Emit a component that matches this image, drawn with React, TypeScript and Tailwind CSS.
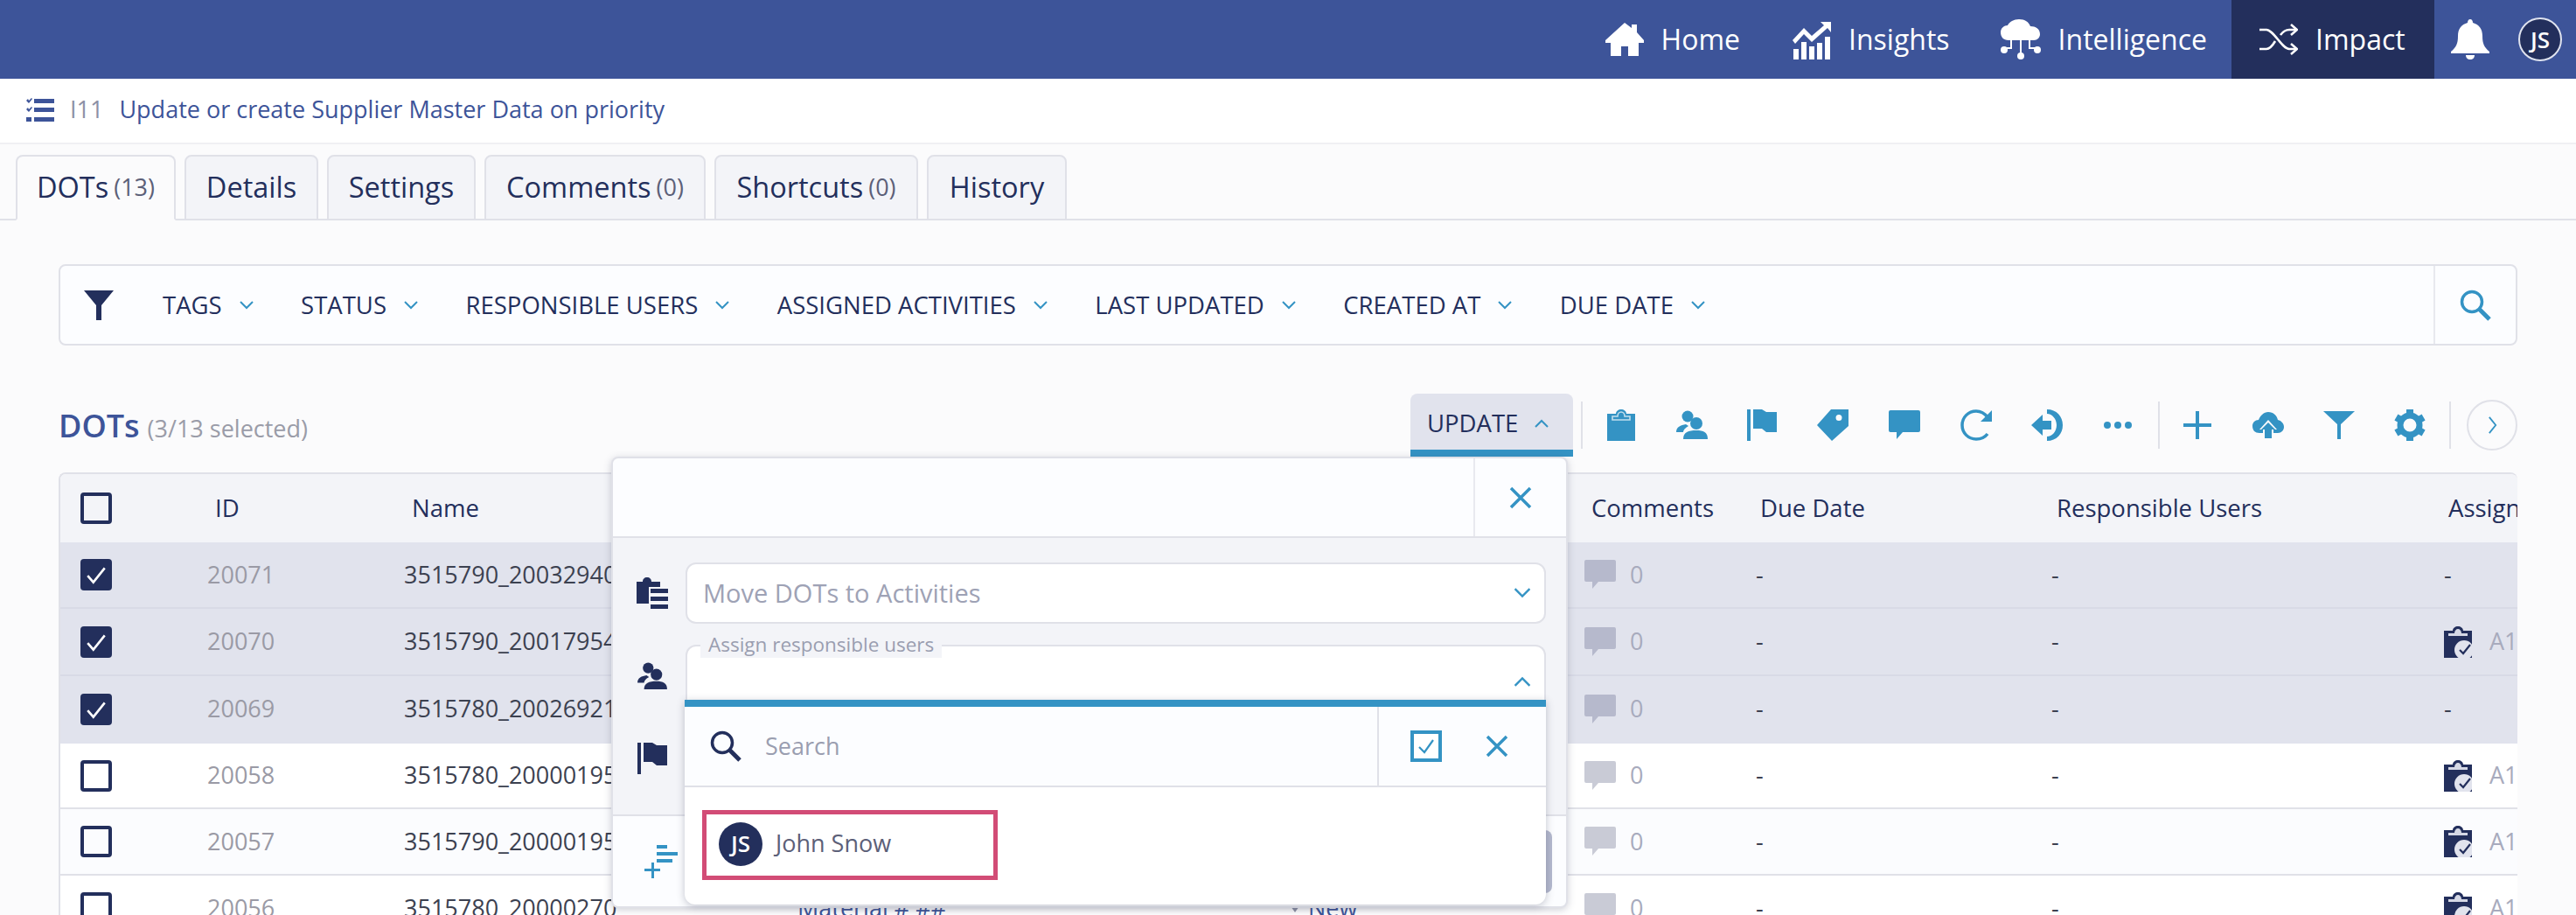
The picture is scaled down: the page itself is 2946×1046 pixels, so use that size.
import React from "react";

type IP = { className?: string };

const Home = ({ className }: IP) => (
  <svg viewBox="0 0 44 38" className={className} fill="currentColor">
    <path d="M22 0 L30 6 V2 H36 V11 L44 20 V23 H38 V38 H26 V27 H18 V38 H6 V23 H0 V20 Z" />
  </svg>
);
const InsightsI = ({ className }: IP) => (
  <svg viewBox="0 0 44 46" className={className} fill="currentColor">
    <path d="M0 24 L13 10 L22 19 L36 7 L32 3 H44 V15 L40 10 L22 26 L13 17 L3 28 Z" />
    <rect x="1" y="34" width="6" height="12" />
    <rect x="10" y="26" width="6" height="20" />
    <rect x="19" y="31" width="6" height="15" />
    <rect x="28" y="27" width="6" height="19" />
    <rect x="37" y="20" width="6" height="26" />
  </svg>
);
const CloudNet = ({ className }: IP) => (
  <svg viewBox="0 0 46 46" className={className} fill="currentColor">
    <path d="M9 24 C3 24 0 20 0 15 C0 10 4 7 8 7 C10 3 15 0 21 0 C28 0 32 3 34 8 C40 8 45 11 45 17 C45 21 42 24 38 24 Z" />
    <path d="M12 24 V33 H6 M23 24 V40 M33 24 V33 H40" fill="none" stroke="currentColor" strokeWidth="2" />
    <circle cx="4" cy="35" r="4" />
    <circle cx="23" cy="42" r="4" />
    <circle cx="42" cy="35" r="4" />
  </svg>
);
const ShuffleI = ({ className }: IP) => (
  <svg viewBox="0 0 44 36" className={className} fill="none" stroke="currentColor" strokeWidth="2.6">
    <path d="M0 7 H8 C16 7 26 29 34 29 H42" />
    <path d="M0 29 H8 C12 29 15 25 18 20 M24 13 C27 9 30 7 34 7 H42" />
    <path d="M36 1 L43 7 L36 13 M36 23 L43 29 L36 35" />
  </svg>
);
const Bell = ({ className }: IP) => (
  <svg viewBox="0 0 46 46" className={className} fill="currentColor">
    <path d="M23 0 C25 0 26 2 26 4 C33 6 37 11 37 19 C37 28 39 32 45 37 V39 H1 V37 C7 32 9 28 9 19 C9 11 13 6 20 4 C20 2 21 0 23 0 Z" />
    <path d="M18 41 H28 C28 44 26 46 23 46 C20 46 18 44 18 41 Z" />
  </svg>
);
const ListCheck = ({ className }: IP) => (
  <svg viewBox="0 0 32 28" className={className} fill="currentColor">
    <rect x="9" y="1" width="23" height="5" />
    <rect x="9" y="11" width="23" height="5" />
    <rect x="9" y="22" width="23" height="5" />
    <path d="M0 3 L2 1 L3 3 L6 0 L7 1 L3 6 Z" />
    <path d="M0 13 L2 11 L3 13 L6 10 L7 11 L3 16 Z" />
    <rect x="0" y="22" width="6" height="5" />
  </svg>
);
const Funnel = ({ className }: IP) => (
  <svg viewBox="0 0 34 34" className={className} fill="currentColor">
    <path d="M0 0 H34 L20 17 V34 H14 V17 Z" />
  </svg>
);
const Chev = ({ up, className }: IP & { up?: boolean }) => (
  <svg viewBox="0 0 16 10" className={className} fill="none" stroke="currentColor" strokeWidth="2">
    <path d={up ? "M1 9 L8 2 L15 9" : "M1 1 L8 8 L15 1"} />
  </svg>
);
const SearchI = ({ className }: IP) => (
  <svg viewBox="0 0 36 36" className={className} fill="none" stroke="currentColor">
    <circle cx="14" cy="14" r="11.5" strokeWidth="3.5" />
    <path d="M22 22 L34 34" strokeWidth="5" />
  </svg>
);
const Clip = ({ className }: IP) => (
  <svg viewBox="0 0 32 36" className={className} fill="currentColor">
    <path d="M0 5 H10 C10 2 13 0 16 0 C19 0 22 2 22 5 H32 V36 H0 Z" />
    <path d="M6 8 H12 C12 5 14 3 16 3 C18 3 20 5 20 8 H26 V12 H6 Z" fill="none" stroke="#fff" strokeOpacity="0.7" strokeWidth="1.6" />
  </svg>
);
const UsersI = ({ className }: IP) => (
  <svg viewBox="0 0 36 34" className={className} fill="currentColor" stroke="none">
    <circle cx="13" cy="7" r="6.5" />
    <path d="M0 25 C0 19 5 17 11 16 L14 18 C10 20 8 23 8 25 Z" />
    <circle cx="23" cy="15" r="7" />
    <path d="M8 33 C8 25 14 23 23 23 C31 23 36 25 36 33 Z" />
  </svg>
);
const FlagI = ({ className }: IP) => (
  <svg viewBox="0 0 34 36" className={className} fill="currentColor">
    <rect x="0" y="0" width="4" height="36" />
    <path d="M7 0 H17 L22 3 H34 V26 H22 L17 22 H7 Z" />
  </svg>
);
const TagI = ({ className }: IP) => (
  <svg viewBox="0 0 36 36" className={className} fill="currentColor">
    <path fillRule="evenodd" d="M16 0 H36 V19 L17 36 L0 18 Z M25 6 A3.5 3.5 0 1 0 25 13 A3.5 3.5 0 1 0 25 6 Z" />
  </svg>
);
const CommentI = ({ className }: IP) => (
  <svg viewBox="0 0 36 34" className={className} fill="currentColor">
    <path d="M2 0 H34 Q36 0 36 2 V23 Q36 25 34 25 H16 L9 33 V25 H2 Q0 25 0 23 V2 Q0 0 2 0 Z" />
  </svg>
);
const RedoI = ({ className }: IP) => (
  <svg viewBox="0 0 36 36" className={className} fill="none" stroke="currentColor">
    <path d="M31 28 C28 32 23 34 18 34 C9 34 2 27 2 18 C2 9 9 2 18 2 C24 2 28 5 31 9" strokeWidth="3.5" />
    <path d="M36 1 V14 H23 Z" fill="currentColor" stroke="none" />
  </svg>
);
const BackI = ({ className }: IP) => (
  <svg viewBox="0 0 36 36" className={className} fill="currentColor">
    <path d="M18 0 C29 0 36 8 36 18 C36 28 29 36 18 36 V31 C24 31 29 25 29 18 C29 11 24 5 18 5 Z" />
    <path d="M0 18 L13 6 V13 H23 V23 H13 V30 Z" />
  </svg>
);
const Dots = ({ className }: IP) => (
  <svg viewBox="0 0 32 10" className={className} fill="currentColor">
    <circle cx="4" cy="5" r="4" />
    <circle cx="16" cy="5" r="4" />
    <circle cx="28" cy="5" r="4" />
  </svg>
);
const PlusI = ({ className }: IP) => (
  <svg viewBox="0 0 32 32" className={className} fill="currentColor">
    <rect x="14" y="0" width="4" height="32" />
    <rect x="0" y="14" width="32" height="4" />
  </svg>
);
const UploadI = ({ className }: IP) => (
  <svg viewBox="0 0 36 30" className={className} fill="currentColor">
    <path d="M8 24 C3 24 0 21 0 16 C0 12 3 9 7 9 C9 4 13 0 18 0 C24 0 28 4 29 9 C33 10 36 13 36 17 C36 21 33 24 29 24 H24 V20 H28 L18 9 L8 20 H12 V24 Z" />
    <path d="M14 30 V20 H10 L18 12 L26 20 H22 V30 Z" />
  </svg>
);
const FilterI = ({ className }: IP) => (
  <svg viewBox="0 0 36 32" className={className} fill="currentColor">
    <path d="M0 0 H36 L20 15 V32 H16 V15 Z" />
  </svg>
);
const GearI = ({ className }: IP) => (
  <svg viewBox="0 0 36 36" className={className} fill="currentColor">
    <circle cx="18" cy="18" r="11" fill="none" stroke="currentColor" strokeWidth="7" />
    {[0, 60, 120, 180, 240, 300].map((a) => (
      <rect key={a} x="14" y="0" width="8" height="8" transform={`rotate(${a} 18 18)`} />
    ))}
  </svg>
);
const CloseI = ({ className }: IP) => (
  <svg viewBox="0 0 26 26" className={className} fill="none" stroke="currentColor" strokeWidth="3.5">
    <path d="M2 2 L24 24 M24 2 L2 24" />
  </svg>
);
const MoveI = ({ className }: IP) => (
  <svg viewBox="0 0 36 36" className={className} fill="currentColor">
    <path d="M0 5 H7 C7 2 9 0 12 0 C15 0 17 2 17 5 H27 V11 H14 V30 H0 Z" />
    <rect x="16" y="13" width="20" height="5" />
    <rect x="16" y="22" width="20" height="5" />
    <rect x="16" y="31" width="20" height="5" />
  </svg>
);
const SortAdd = ({ className }: IP) => (
  <svg viewBox="0 0 38 38" className={className} fill="currentColor">
    <rect x="14" y="0" width="12" height="4" />
    <rect x="14" y="8" width="24" height="4" />
    <rect x="14" y="16" width="18" height="4" />
    <rect x="0" y="27" width="18" height="3" />
    <rect x="8" y="20" width="3" height="18" />
  </svg>
);
const ClipCheck = ({ className }: IP) => (
  <svg viewBox="0 0 32 36" className={className}>
    <path d="M0 5 H10 C10 2 13 0 16 0 C19 0 22 2 22 5 H32 V36 H0 Z" fill="#232f5c" />
    <path d="M5 8 H12 C12 5 14 3 16 3 C18 3 20 5 20 8 H27 V11 H5 Z" fill="#d5d8e5" />
    <circle cx="23" cy="27" r="11" fill="#e1e3ed" />
    <path d="M18 27 L22 31 L30 21" fill="none" stroke="#232f5c" strokeWidth="2.2" />
  </svg>
);

const tabs: { t: string; c?: string; w: string }[] = [
  { t: "DOTs", c: "(13)", w: "w-[183px]" },
  { t: "Details", w: "w-[153px]" },
  { t: "Settings", w: "w-[170px]" },
  { t: "Comments", c: "(0)", w: "w-[253px]" },
  { t: "Shortcuts", c: "(0)", w: "w-[233px]" },
  { t: "History", w: "w-[160px]" },
];

const filters = ["TAGS", "STATUS", "RESPONSIBLE USERS", "ASSIGNED ACTIVITIES", "LAST UPDATED", "CREATED AT", "DUE DATE"];

const rows = [
  { id: "20071", name: "3515790_20032940", h: "h-[76px]", bg: "bg-[#e1e3ed]", border: "border-[#d8dae6]", on: true, a: false },
  { id: "20070", name: "3515790_20017954", h: "h-[77px]", bg: "bg-[#e1e3ed]", border: "border-[#d8dae6]", on: true, a: true },
  { id: "20069", name: "3515780_20026921", h: "h-[77px]", bg: "bg-[#e1e3ed]", border: "border-[#e1e3ed]", on: true, a: false },
  { id: "20058", name: "3515780_20000195", h: "h-[75px]", bg: "bg-white", border: "border-[#e0e1e8]", on: false, a: true },
  { id: "20057", name: "3515790_20000195", h: "h-[76px]", bg: "bg-[#fbfcfe]", border: "border-[#e0e1e8]", on: false, a: true },
  { id: "20056", name: "3515780_20000270", h: "h-[76px]", bg: "bg-white", border: "border-[#e0e1e8]", on: false, a: true },
];

const Tool = ({ w, children }: { w: string; children: React.ReactNode }) => (
  <div className={`flex shrink-0 items-center justify-center text-[#3493c4] ${w}`}>{children}</div>
);

export default function App() {
  return (
    <div className="relative h-[1046px] w-[2946px] overflow-hidden bg-[#fbfbfc] font-['Open_Sans',sans-serif]">
      {/* top bar */}
      <header className="flex h-[90px] items-center justify-end bg-[#3d5499] text-[32px] leading-none text-white">
        <div className="flex h-full items-center gap-[20px] pr-[60px]">
          <Home className="h-[38px] w-[44px]" />
          <span>Home</span>
        </div>
        <div className="flex h-full items-center gap-[20px] pr-[58px]">
          <InsightsI className="h-[46px] w-[44px]" />
          <span>Insights</span>
        </div>
        <div className="flex h-full items-center gap-[20px] pr-[28px]">
          <CloudNet className="h-[46px] w-[46px]" />
          <span>Intelligence</span>
        </div>
        <div className="flex h-full w-[232px] items-center gap-[20px] bg-[#232f5c] pl-[32px]">
          <ShuffleI className="h-[36px] w-[44px]" />
          <span>Impact</span>
        </div>
        <div className="flex h-full w-[162px] items-center pl-[18px]">
          <Bell className="h-[46px] w-[46px]" />
          <div className="ml-[32px] flex h-[50px] w-[50px] items-center justify-center rounded-full border-2 border-[#dfe3ef] bg-[#232f5c] text-[26px] font-semibold">
            JS
          </div>
        </div>
      </header>

      {/* breadcrumb */}
      <div className="flex h-[75px] items-center border-b-2 border-[#f0f0f3] bg-white pb-[2px] pl-[30px] text-[27px] text-[#3d5499]">
        <ListCheck className="h-[28px] w-[32px]" />
        <span className="ml-[18px] text-[#8d91a6]">I11</span>
        <span className="ml-[18px]">Update or create Supplier Master Data on priority</span>
      </div>

      {/* tabs */}
      <div className="flex h-[87px] items-end gap-[10px] border-b-2 border-[#e0e1e8] pl-[18px]">
        {tabs.map((t, i) => (
          <div
            key={t.t}
            className={`-mb-[2px] flex h-[75px] items-center justify-center gap-[6px] rounded-t-lg border-2 border-[#e0e1e8] text-[32.5px] font-medium text-[#232f5c] ${t.w} ${
              i === 0 ? "border-b-[#fbfbfc] bg-[#fbfbfc]" : "bg-[#f3f4f8]"
            }`}
          >
            <span>{t.t}</span>
            {t.c && <span className="text-[27px] font-normal text-[#5c6078]">{t.c}</span>}
          </div>
        ))}
      </div>

      {/* filters */}
      <div className="mx-[67px] mt-[50px] flex h-[93px] items-center rounded-lg border-2 border-[#e0e1e8] bg-[#fcfdff] pl-[27px]">
        <Funnel className="h-[34px] w-[34px] text-[#232f5c]" />
        <div className="ml-[56px] flex flex-1 items-center gap-[54.5px]">
          {filters.map((f) => (
            <div key={f} className="flex items-center gap-[20px] text-[27.5px] font-medium whitespace-nowrap text-[#232f5c]">
              <span>{f}</span>
              <Chev className="h-[10px] w-[16px] text-[#3493c4]" />
            </div>
          ))}
        </div>
        <div className="flex h-full w-[94px] items-center justify-center border-l-2 border-[#e8e9ef] text-[#3493c4]">
          <SearchI className="h-[36px] w-[36px]" />
        </div>
      </div>

      {/* title and tools */}
      <div className="mx-[67px] mt-[55px] flex h-[72px] items-center justify-between">
        <div className="flex items-baseline gap-[9px] pt-[2px]">
          <span className="text-[36px] font-semibold text-[#3d5499]">DOTs</span>
          <span className="text-[27px] text-[#9a9ca8]">(3/13 selected)</span>
        </div>
        <div className="flex h-full items-center">
          <div className="flex h-[72px] w-[186px] items-center gap-[19px] rounded-t-lg border-b-[8px] border-[#3493c4] bg-[#e1e3ed] pt-[4px] pl-[19px] text-[27.5px] font-medium text-[#232f5c]">
            <span>UPDATE</span>
            <Chev up className="h-[10px] w-[16px] text-[#3493c4]" />
          </div>
          <div className="ml-[9px] h-[54px] w-[2px] bg-[#e0e1e8]" />
          <div className="ml-[3px] flex items-center">
            <Tool w="w-[81px]"><Clip className="h-[36px] w-[32px]" /></Tool>
            <Tool w="w-[81px]"><UsersI className="h-[34px] w-[36px]" /></Tool>
            <Tool w="w-[80px]"><FlagI className="h-[36px] w-[34px]" /></Tool>
            <Tool w="w-[82px]"><TagI className="h-[36px] w-[36px]" /></Tool>
            <Tool w="w-[82px]"><CommentI className="h-[34px] w-[36px]" /></Tool>
            <Tool w="w-[81px]"><RedoI className="h-[36px] w-[36px]" /></Tool>
            <Tool w="w-[81px]"><BackI className="h-[36px] w-[36px]" /></Tool>
            <Tool w="w-[81px]"><Dots className="h-[10px] w-[32px]" /></Tool>
          </div>
          <div className="ml-[6px] h-[54px] w-[2px] bg-[#e0e1e8]" />
          <div className="ml-[2px] flex items-center">
            <Tool w="w-[81px]"><PlusI className="h-[32px] w-[32px]" /></Tool>
            <Tool w="w-[82px]"><UploadI className="h-[30px] w-[36px]" /></Tool>
            <Tool w="w-[80px]"><FilterI className="h-[32px] w-[36px]" /></Tool>
            <Tool w="w-[82px]"><GearI className="h-[36px] w-[36px]" /></Tool>
          </div>
          <div className="ml-[4px] h-[54px] w-[2px] bg-[#e0e1e8]" />
          <div className="ml-[18px] flex h-[58px] w-[58px] items-center justify-center rounded-full border-2 border-[#e0e1e8] text-[#3493c4]">
            <svg viewBox="0 0 12 24" className="h-[22px] w-[11px]" fill="none" stroke="currentColor" strokeWidth="2">
              <path d="M2 2 L10 12 L2 22" />
            </svg>
          </div>
        </div>
      </div>

      {/* table */}
      <div className="mx-[67px] mt-[18px] overflow-hidden rounded-t-lg border-t-2 border-l-2 border-[#e0e1e8] text-[27px] whitespace-nowrap">
        <div className="flex h-[78px] items-center bg-[#f3f4f8] text-[27.5px] font-medium text-[#232f5c]">
          <div className="w-[168px] shrink-0 pl-[23px]">
            <div className="h-[36px] w-[36px] rounded-[4px] border-[4px] border-[#232f5c]" />
          </div>
          <div className="w-[225px] shrink-0 pl-[9px]">ID</div>
          <div className="w-[450px] shrink-0 pl-[9px]">Name</div>
          <div className="w-[562px] shrink-0 pl-[9px]">Type</div>
          <div className="w-[338px] shrink-0 pl-[9px]">Status</div>
          <div className="w-[196px] shrink-0 pl-[8px]">Comments</div>
          <div className="w-[338px] shrink-0 pl-[5px]">Due Date</div>
          <div className="w-[449px] shrink-0 pl-[6px]">Responsible Users</div>
          <div className="pl-[5px]">Assigned Activities</div>
        </div>
        {rows.map((r) => (
          <div key={r.id} className={`flex items-center border-b-2 ${r.h} ${r.bg} ${r.border}`}>
            <div className="w-[168px] shrink-0 pl-[23px]">
              {r.on ? (
                <div className="flex h-[36px] w-[36px] items-center justify-center rounded-[4px] bg-[#232f5c]">
                  <svg viewBox="0 0 24 24" className="h-[26px] w-[26px]" fill="none" stroke="#fff" strokeWidth="2.4">
                    <path d="M3 13 L9 20 L21 5" />
                  </svg>
                </div>
              ) : (
                <div className="h-[36px] w-[36px] rounded-[4px] border-[4px] border-[#232f5c]" />
              )}
            </div>
            <div className="w-[225px] shrink-0 text-[#9a9aa5]">{r.id}</div>
            <div className="w-[450px] shrink-0 text-[#3c4150]">{r.name}</div>
            <div className="w-[562px] shrink-0 text-[#3d5499]">Material # ##</div>
            <div className="flex w-[338px] shrink-0 items-center gap-[8px] text-[#3d5499]">
              <svg viewBox="0 0 14 10" className="h-[10px] w-[14px]" fill="#8f93a6">
                <path d="M0 0 H14 L7 10 Z" />
              </svg>
              New
            </div>
            <div className="flex w-[196px] shrink-0 items-center gap-[16px]">
              <CommentI className={`h-[34px] w-[36px] ${r.on ? "text-[#b6b9cc]" : "text-[#c9cbd6]"}`} />
              <span className="text-[#a8abbd]">0</span>
            </div>
            <div className="w-[338px] shrink-0 text-[#3c4150]">-</div>
            <div className="w-[449px] shrink-0 text-[#3c4150]">-</div>
            {r.a ? (
              <div className="flex items-center gap-[20px]">
                <ClipCheck className="h-[36px] w-[32px]" />
                <span className="text-[#a8abbd]">A1</span>
              </div>
            ) : (
              <div className="text-[#3c4150]">-</div>
            )}
          </div>
        ))}
      </div>

      {/* update popover */}
      <div className="absolute top-[522px] left-[699px] flex h-[516px] w-[1094px] flex-col rounded-lg border-2 border-[#e0e1e8] bg-[#fcfdff] shadow-[0_2px_8px_rgba(60,64,90,0.25)]">
        <div className="flex h-[91px] shrink-0 justify-end border-b-2 border-[#e0e1e8]">
          <div className="flex w-[106px] items-center justify-center border-l-2 border-[#e8e9ef] text-[#3493c4]">
            <CloseI className="h-[26px] w-[26px]" />
          </div>
        </div>
        <div className="flex shrink-0 flex-col gap-[24px] border-b-2 border-[#e0e1e8] bg-[#f3f4f8] pt-[28px] pr-[23px] pb-[29px] pl-[27px]">
          <div className="flex h-[70px] items-center">
            <MoveI className="h-[36px] w-[36px] text-[#232f5c]" />
            <div className="ml-[20px] flex h-full flex-1 items-center justify-between rounded-xl border-2 border-[#e0e1e8] bg-white pr-[14px] pl-[18px] text-[29px] text-[#9ea2b5]">
              <span>Move DOTs to Activities</span>
              <Chev className="h-[12px] w-[22px] text-[#3493c4]" />
            </div>
          </div>
          <div className="flex h-[71px] items-center">
            <UsersI className="h-[32px] w-[36px] text-[#232f5c]" />
            <div className="relative ml-[20px] flex h-full flex-1 items-center justify-end rounded-t-xl border-2 border-b-0 border-[#e0e1e8] bg-white pt-[10px] pr-[14px]">
              <span className="absolute -top-[17px] left-[15px] bg-[#f3f4f8] px-[9px] text-[22.5px] leading-[30px] text-[#9a9eb0]">
                Assign responsible users
              </span>
              <Chev up className="h-[12px] w-[22px] text-[#3493c4]" />
            </div>
          </div>
          <div className="flex h-[70px] items-center">
            <FlagI className="h-[36px] w-[36px] text-[#232f5c]" />
          </div>
        </div>
        <div className="flex flex-1 items-center justify-between pr-[16px] pl-[36px]">
          <SortAdd className="h-[38px] w-[38px] text-[#3493c4]" />
          <div className="h-[72px] w-[200px] rounded-lg bg-[#b4b9ce]" />
        </div>

        {/* users dropdown */}
        <div className="absolute top-[276px] left-[82px] h-[234px] w-[985px] rounded-b-xl bg-white shadow-[0_2px_10px_rgba(60,64,90,0.3)]">
          <div className="h-[8px] bg-[#3493c4]" />
          <div className="flex h-[92px] items-center border-b-2 border-[#e0e1e8] bg-[#fcfdff]">
            <SearchI className="ml-[29px] h-[36px] w-[36px] text-[#232f5c]" />
            <span className="ml-[27px] text-[27px] text-[#9a9eb0]">Search</span>
            <div className="ml-auto flex h-full w-[193px] items-center border-l-2 border-[#e0e1e8] pl-[36px]">
              <div className="flex h-[36px] w-[36px] items-center justify-center border-[4px] border-[#3493c4] bg-white">
                <svg viewBox="0 0 24 24" className="h-[24px] w-[24px]" fill="none" stroke="#3493c4" strokeWidth="2.2">
                  <path d="M4 13 L10 19 L20 5" />
                </svg>
              </div>
              <CloseI className="ml-[50px] h-[26px] w-[26px] text-[#3493c4]" />
            </div>
          </div>
          <div className="mt-[26px] ml-[20px] flex h-[80px] w-[338px] items-center gap-[15px] border-[5px] border-[#d24c76] pb-[3px] pl-[14px]">
            <div className="flex h-[50px] w-[50px] shrink-0 items-center justify-center rounded-full bg-[#232f5c] text-[26px] font-semibold text-white">
              JS
            </div>
            <span className="text-[27px] text-[#5c6078]">John Snow</span>
          </div>
        </div>
      </div>
    </div>
  );
}
